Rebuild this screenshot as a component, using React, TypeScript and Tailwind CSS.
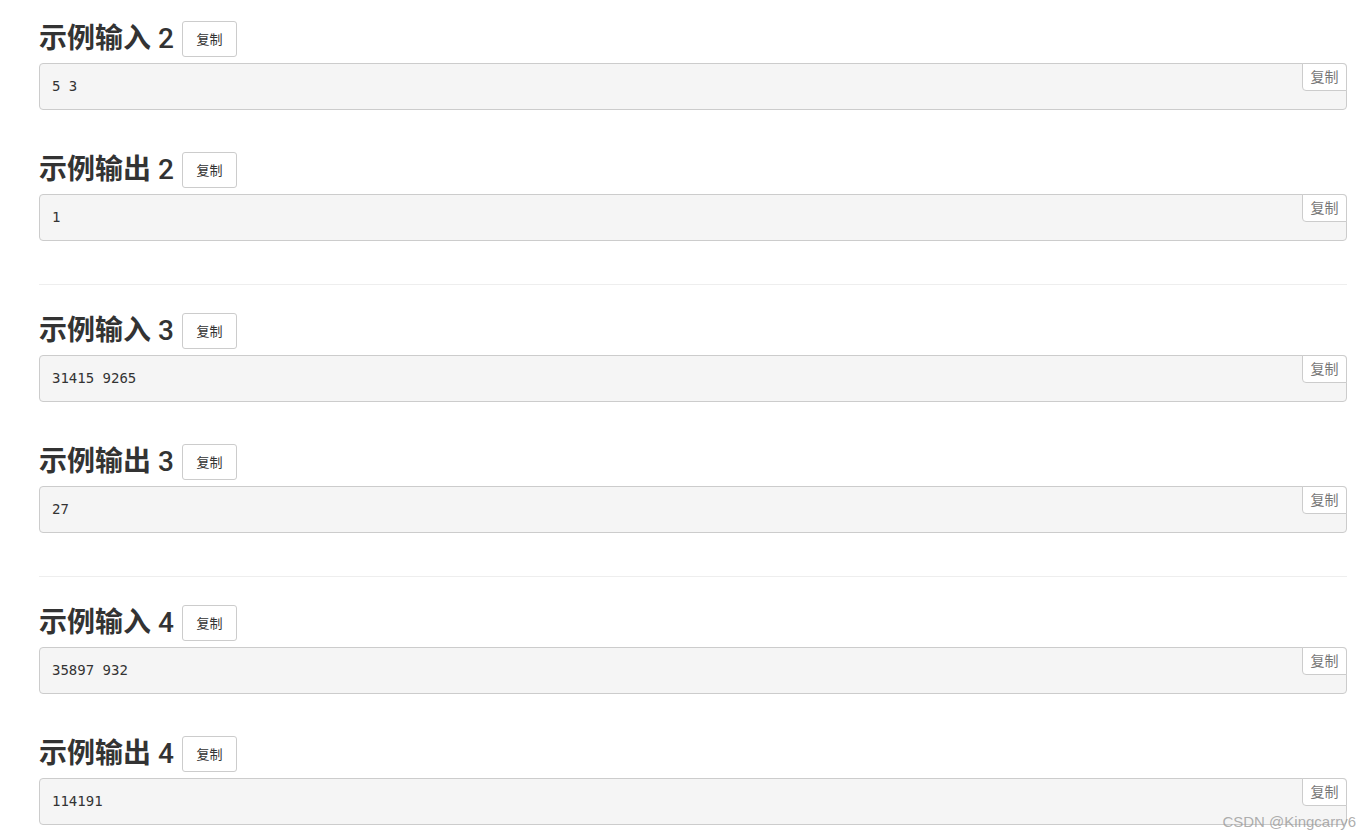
const samples = [
  { n: 2, input: "5 3", output: "1" },
  { n: 3, input: "31415 9265", output: "27" },
  { n: 4, input: "35897 932", output: "114191" },
];

const CopyButton = () => (
  <button className="ml-[8px] h-9 w-[55px] rounded-[3px] border border-[#ccc] bg-white text-[13px] leading-none text-[#333]">
    复制
  </button>
);

const Block = ({ title, n, value }: { title: string; n: number; value: string }) => (
  <div>
    <div className="flex h-9 items-center">
      <h3 className="text-[28px] leading-9 text-[#333]">
        <span className="font-bold">{title}</span>
        <span className="font-medium [font-family:Roboto,sans-serif]"> {n}</span>
      </h3>
      <CopyButton />
    </div>
    <div className="relative mt-[6px] flex h-[47px] items-center rounded-[4px] border border-[#ccc] bg-[#f5f5f5] px-3">
      <pre className="whitespace-pre text-[14px] text-[#333] [font-family:'DejaVu_Sans_Mono',monospace]">
        {value}
      </pre>
      <button className="absolute -right-px -top-px h-[28px] w-[45px] rounded-bl-[4px] rounded-tr-[4px] border border-[#ccc] bg-white text-[14px] leading-none text-[#777]">
        复制
      </button>
    </div>
  </div>
);

export default function App() {
  return (
    <div className="relative min-h-[838px] bg-white pl-[39px] pr-[24px] pt-[21px] [font-family:'Liberation_Sans','Noto_Sans_CJK_SC',sans-serif]">
      {samples.map((s, i) => (
        <div key={s.n}>
          {i > 0 && <hr className="mb-[28px] mt-[43px] border-t border-[#eee]" />}
          <Block title="示例输入" n={s.n} value={s.input} />
          <div className="mt-[42px]">
            <Block title="示例输出" n={s.n} value={s.output} />
          </div>
        </div>
      ))}
      <div className="pointer-events-none absolute bottom-[9px] right-[15px] text-[15px] leading-none text-[#999]/80">
        CSDN @Kingcarry6
      </div>
    </div>
  );
}
